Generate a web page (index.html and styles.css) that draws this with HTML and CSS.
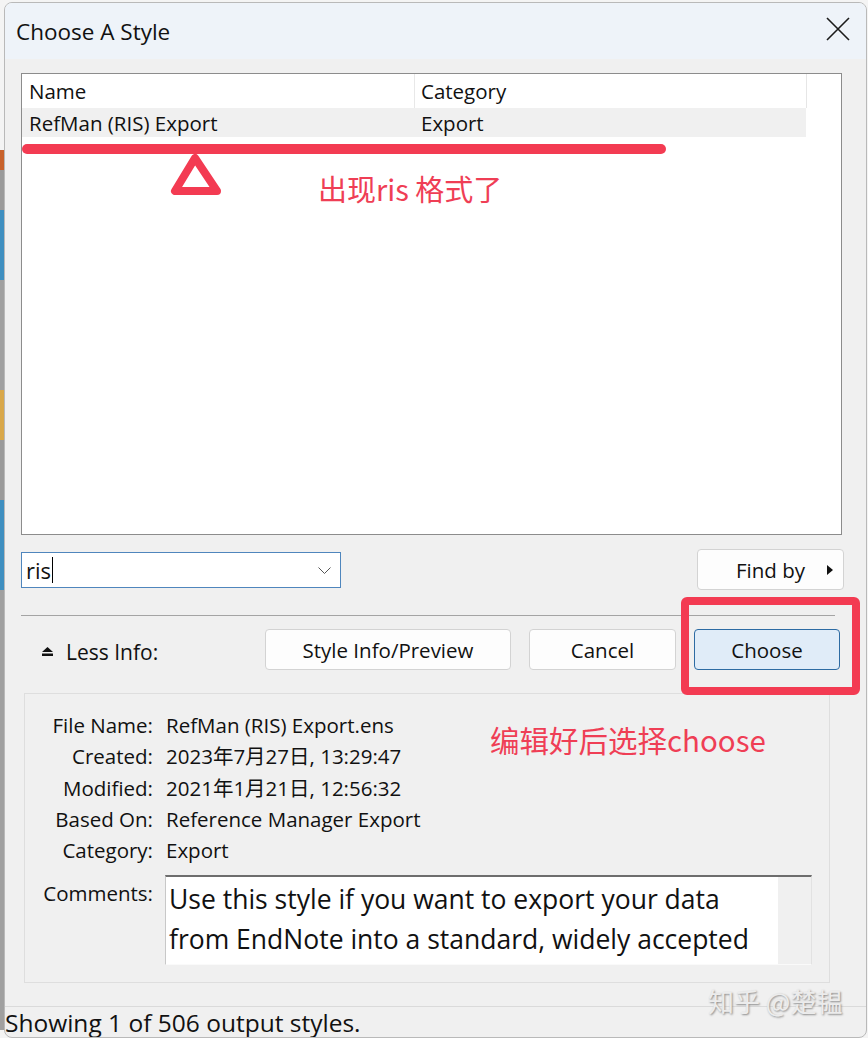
FILE: index.html
```html
<!DOCTYPE html>
<html lang="zh-CN">
<head>
  <meta charset="UTF-8" />
  <meta name="viewport" content="width=device-width, initial-scale=1.0" />
  <title>Choose A Style</title>
  <link rel="stylesheet" href="styles.css">
</head>
<body>
  <div class="desk-strip"></div>

  <div class="window">
    <header class="titlebar">
      <h1>Choose A Style</h1>
      <button class="close-x" aria-label="Close">
        <svg width="24" height="24" viewBox="0 0 24 24"><path d="M1 1 L23 23 M23 1 L1 23" stroke="#1b1b1b" stroke-width="1.6" fill="none"/></svg>
      </button>
    </header>

    <div class="dialog">
      <div class="list">
        <div class="list-head">
          <div class="col col-name">Name</div>
          <div class="col col-cat">Category</div>
        </div>
        <div class="list-row">
          <div class="col col-name">RefMan (RIS) Export</div>
          <div class="col col-cat">Export</div>
        </div>
      </div>

      <div class="search-row">
        <div class="combo">
          <span class="combo-text">ris</span><span class="caret"></span>
          <svg class="chevron" width="13" height="8" viewBox="0 0 13 8"><path d="M0.5 0.5 L6.5 6.5 L12.5 0.5" stroke="#555" stroke-width="1" fill="none"/></svg>
        </div>
        <button class="btn find-btn">Find by
          <svg width="6" height="10" viewBox="0 0 6 10"><path d="M0 0 L6 5 L0 10 Z" fill="#111"/></svg>
        </button>
      </div>

      <hr class="sep">

      <div class="action-row">
        <div class="less-info">
          <svg width="11" height="10" viewBox="0 0 11 10"><path d="M5.5 0 L11 5 L0 5 Z M0 6.5 H11 V9 H0 Z" fill="#111"/></svg>
          <span>Less Info:</span>
        </div>
        <button class="btn btn-preview">Style Info/Preview</button>
        <button class="btn btn-cancel">Cancel</button>
        <button class="btn btn-choose">Choose</button>
      </div>

      <div class="info">
        <div class="info-grid">
          <div class="lbl">File Name:</div><div class="val">RefMan (RIS) Export.ens</div>
          <div class="lbl">Created:</div><div class="val">2023年7月27日, 13:29:47</div>
          <div class="lbl">Modified:</div><div class="val">2021年1月21日, 12:56:32</div>
          <div class="lbl">Based On:</div><div class="val">Reference Manager Export</div>
          <div class="lbl">Category:</div><div class="val">Export</div>
        </div>
        <div class="comments">
          <div class="lbl">Comments:</div>
          <div class="comment-box">
            <div class="comment-text">Use this style if you want to export your data from EndNote into a standard, widely accepted</div>
            <div class="comment-scroll"></div>
          </div>
        </div>
      </div>
    </div>

    <footer class="status">Showing 1 of 506 output styles.</footer>
  </div>

  <!-- annotations drawn over the screenshot -->
  <div class="mark-line"></div>
  <svg class="mark-tri" width="60" height="50" viewBox="0 0 60 50"><path d="M25 6 L5 39 L47 39 Z" stroke="#f33b52" stroke-width="8" stroke-linejoin="round" fill="none"/></svg>
  <div class="note note-ris">出现ris 格式了</div>
  <div class="mark-box"></div>
  <div class="note note-choose">编辑好后选择choose</div>
  <div class="watermark">知乎 @楚韫</div>
</body>
</html>
```

FILE: styles.css
```css
body {
  margin: 0;
  padding: 0;
  background: #f4f4f4;
  font-family: 'Open Sans', 'Noto Sans', 'Noto Sans CJK SC', sans-serif;
  color: #111;
  display: flex;
  height: 1038px;
  overflow: hidden;
  position: relative;
}

.desk-strip {
  width: 4px;
  flex: none;
  margin-top: 150px;
  height: 880px;
  background: linear-gradient(to bottom,
    #c8622c 0, #c8622c 20px, #9a9a9a 20px, #9a9a9a 60px,
    #3f8fc0 60px, #3f8fc0 130px, #a0a0a0 130px, #a0a0a0 240px,
    #d9a84a 240px, #d9a84a 290px, #9a9a9a 290px, #9a9a9a 350px,
    #3f8fc0 350px, #3f8fc0 440px, #a0a0a0 440px);
}

.window {
  flex: 1;
  margin-top: 2px;
  margin-right: 1px;
  height: 1034px;
  border: 1px solid #b9b9b9;
  border-radius: 8px;
  background: #f0f0f0;
  overflow: hidden;
  display: flex;
  flex-direction: column;
}

.titlebar {
  height: 56px;
  flex: none;
  background: #eef3f9;
  display: flex;
  align-items: center;
  justify-content: space-between;
  padding: 0 16px 0 11px;
}

.titlebar h1 {
  margin: 0;
  font-size: 22.5px;
  font-weight: normal;
  padding-top: 1px;
}

.close-x {
  border: none;
  background: none;
  padding: 0;
  width: 24px;
  height: 24px;
  margin-bottom: 4px;
}

.dialog {
  padding: 14px 0 0 16px;
  flex: none;
  height: 948px;
  box-sizing: border-box;
  border-bottom: 1px solid #dadada;
}

.list {
  width: 821px;
  height: 462px;
  box-sizing: border-box;
  border: 1px solid #8c8c8c;
  background: #fff;
  font-size: 20.5px;
}

.list-head,
.list-row {
  display: flex;
  width: 784px;
}

.list-head {
  height: 34px;
  border-right: 1px solid #e6e6e6;
}

.list-row {
  height: 29px;
  background: #f0f0f0;
}

.col {
  box-sizing: border-box;
  padding-left: 7px;
  display: flex;
  align-items: center;
}

.col-name { width: 392px; }
.col-cat { width: 392px; }

.list-head .col-cat {
  border-left: 1px solid #e8e8e8;
  padding-left: 6px;
}

.search-row {
  display: flex;
  justify-content: space-between;
  align-items: center;
  width: 823px;
  margin-top: 14px;
}

.combo {
  width: 320px;
  height: 36px;
  box-sizing: border-box;
  border: 1px solid #4f86bd;
  background: #fff;
  display: flex;
  align-items: center;
  padding-left: 4px;
  font-size: 22px;
  position: relative;
}

.caret {
  width: 1px;
  height: 26px;
  background: #000;
  margin-left: 1px;
}

.chevron {
  position: absolute;
  right: 9px;
  top: 14px;
}

.btn {
  font-family: inherit;
  font-size: 20.5px;
  color: #111;
  background: #fdfdfd;
  border: 1px solid #d3d3d3;
  border-radius: 4px;
  height: 41px;
  padding: 0;
}

.find-btn {
  width: 147px;
  display: flex;
  align-items: center;
  justify-content: flex-end;
  gap: 22px;
  padding-right: 10px;
  box-sizing: border-box;
}

.sep {
  width: 814px;
  margin: 25px 0 0 0;
  border: none;
  border-top: 1px solid #a4a4a4;
}

.action-row {
  display: flex;
  align-items: center;
  margin-top: 13px;
  height: 41px;
}

.less-info {
  display: flex;
  align-items: center;
  gap: 13px;
  width: 244px;
  padding-left: 21px;
  box-sizing: border-box;
  font-size: 21px;
  padding-top: 4px;
}

.btn-preview { width: 246px; margin-right: 18px; }
.btn-cancel { width: 147px; margin-right: 18px; }

.btn-choose {
  width: 146px;
  background: #e0ecf8;
  border-color: #2d6ba3;
}

.info {
  margin: 23px 0 0 3px;
  width: 806px;
  height: 290px;
  box-sizing: border-box;
  border: 1px solid #dedede;
  padding: 16px 0 0 0;
}

.info-grid {
  display: grid;
  grid-template-columns: 128px auto;
  column-gap: 13px;
  row-gap: 0;
  font-size: 20.5px;
}

.info-grid > div {
  height: 31.3px;
  line-height: 31px;
}

.lbl {
  text-align: right;
  font-size: 20.5px;
}

.comments {
  display: grid;
  grid-template-columns: 128px auto;
  column-gap: 12px;
  margin-top: 9px;
}

.comments .lbl {
  padding-top: 4px;
}

.comment-box {
  width: 647px;
  height: 90px;
  box-sizing: border-box;
  border-top: 2px solid #6d6d6d;
  border-left: 1px solid #c8c8c8;
  border-right: 1px solid #e2e2e2;
  border-bottom: 1px solid #fafafa;
  display: flex;
  background: #f0f0f0;
}

.comment-text {
  width: 612px;
  background: #fff;
  font-size: 26.5px;
  line-height: 40px;
  padding: 2px 4px 0 3px;
  box-sizing: border-box;
  overflow: hidden;
}

.status {
  font-size: 24.5px;
  padding: 0;
  line-height: 32px;
}

/* annotations */
.mark-line {
  position: absolute;
  left: 22px;
  top: 144px;
  width: 644px;
  height: 10px;
  border-radius: 5px;
  background: #f33b52;
}

.mark-tri {
  position: absolute;
  left: 170px;
  top: 152px;
}

.note {
  position: absolute;
  color: #ef3e55;
  font-family: 'Noto Sans CJK SC', 'Open Sans', sans-serif;
}

.note-ris {
  left: 318px;
  top: 168px;
  font-size: 29px;
  line-height: 40px;
}

.mark-box {
  position: absolute;
  left: 681px;
  top: 597px;
  width: 163px;
  height: 82px;
  border: 8px solid #f33b52;
  border-radius: 6px;
}

.note-choose {
  left: 490px;
  top: 718px;
  font-size: 29.5px;
  line-height: 42px;
}

.watermark {
  position: absolute;
  left: 708px;
  top: 982px;
  font-family: 'Noto Sans CJK SC', sans-serif;
  font-size: 26px;
  color: #ececec;
  text-shadow: 1px 1px 2px #8a8a8a;
}
```
